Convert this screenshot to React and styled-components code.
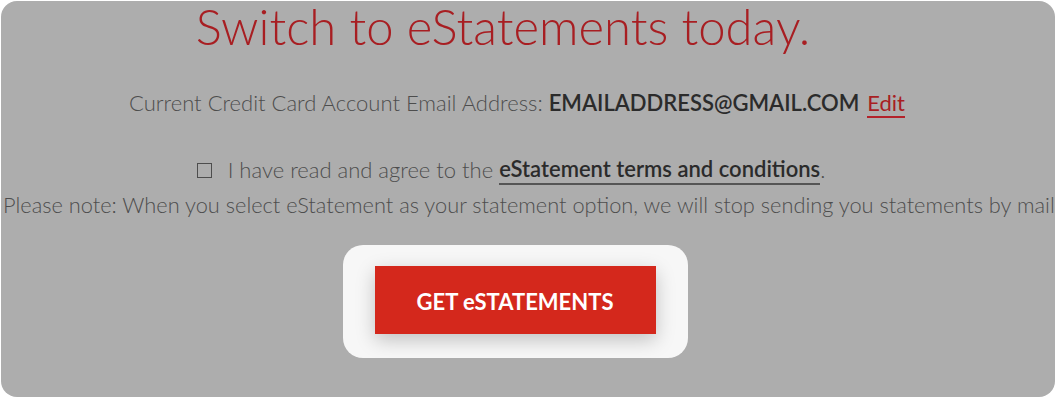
import React from "react";
import styled, { createGlobalStyle } from "styled-components";

const GlobalStyle = createGlobalStyle`
  html, body {
    margin: 0;
    padding: 0;
    background: #ffffff;
  }
  body {
    font-family: Lato, "Open Sans", sans-serif;
  }
`;

const Frame = styled.div`
  width: 1057px;
  height: 400px;
  padding: 1px 2px 3px 1px;
  box-sizing: border-box;
  overflow: hidden;
`;

const Panel = styled.div`
  height: 100%;
  background: #adadad;
  border-radius: 16px;
  display: flex;
  flex-direction: column;
  align-items: center;
  padding-right: 26px;
  box-sizing: border-box;
  overflow: hidden;
`;

const Title = styled.h1`
  margin: 0;
  font-family: Lato, sans-serif;
  font-weight: 300;
  font-size: 49px;
  line-height: 50px;
  color: #a81e22;
  transform: translateX(-12px);
`;

const Line = styled.p`
  margin: 0;
  font-family: Lato, sans-serif;
  font-weight: 300;
  font-size: 22px;
  line-height: 28px;
  color: #4d4d4d;
  white-space: nowrap;
`;

const EmailLine = styled(Line)`
  margin-top: 38px;
  transform: translateX(2px);
`;

const Email = styled.strong`
  font-weight: 600;
  color: #2b2b2b;
  margin-right: 8px;
`;

const EditLink = styled.a`
  color: #a81e22;
  font-weight: 400;
  text-decoration: none;
  border-bottom: 2px solid #b3222a;
`;

const AgreeLine = styled(Line)`
  margin-top: 38px;
  display: flex;
  align-items: center;
  transform: translateX(-4px);
`;

const Box = styled.span`
  display: inline-block;
  width: 13px;
  height: 13px;
  border: 1.5px solid #4d4d4d;
  margin-right: 16px;
`;

const TermsLink = styled.a`
  color: #2b2b2b;
  font-weight: 600;
  text-decoration: none;
  border-bottom: 2px solid #555;
`;

const NoteLine = styled(Line)`
  align-self: stretch;
  text-align: center;
  font-size: 21.8px;
  margin-top: 6px;
  padding-left: 2px;
`;

const Spotlight = styled.div`
  margin-top: 26px;
  background: #f7f7f7;
  border-radius: 20px;
  padding: 21px 32px 24px;
`;

const Button = styled.button`
  display: block;
  width: 281px;
  height: 68px;
  border: none;
  background: #d4281c;
  color: #ffffff;
  font-family: Lato, sans-serif;
  font-weight: 700;
  font-size: 22px;
  padding: 2px 0 0;
  box-shadow: 0 6px 18px rgba(0, 0, 0, 0.22);
  cursor: pointer;
`;

export default function App() {
  return (
    <>
      <GlobalStyle />
      <Frame>
        <Panel>
          <Title>Switch to eStatements today.</Title>
          <EmailLine>
            Current Credit Card Account Email Address:{" "}
            <Email>EMAILADDRESS@GMAIL.COM</Email>
            <EditLink href="#">Edit</EditLink>
          </EmailLine>
          <AgreeLine>
            <Box />
            I have read and agree to the&nbsp;
            <TermsLink href="#">eStatement terms and conditions</TermsLink>.
          </AgreeLine>
          <NoteLine>
            Please note: When you select eStatement as your statement option, we will stop sending you statements by mail.
          </NoteLine>
          <Spotlight>
            <Button>GET eSTATEMENTS</Button>
          </Spotlight>
        </Panel>
      </Frame>
    </>
  );
}
